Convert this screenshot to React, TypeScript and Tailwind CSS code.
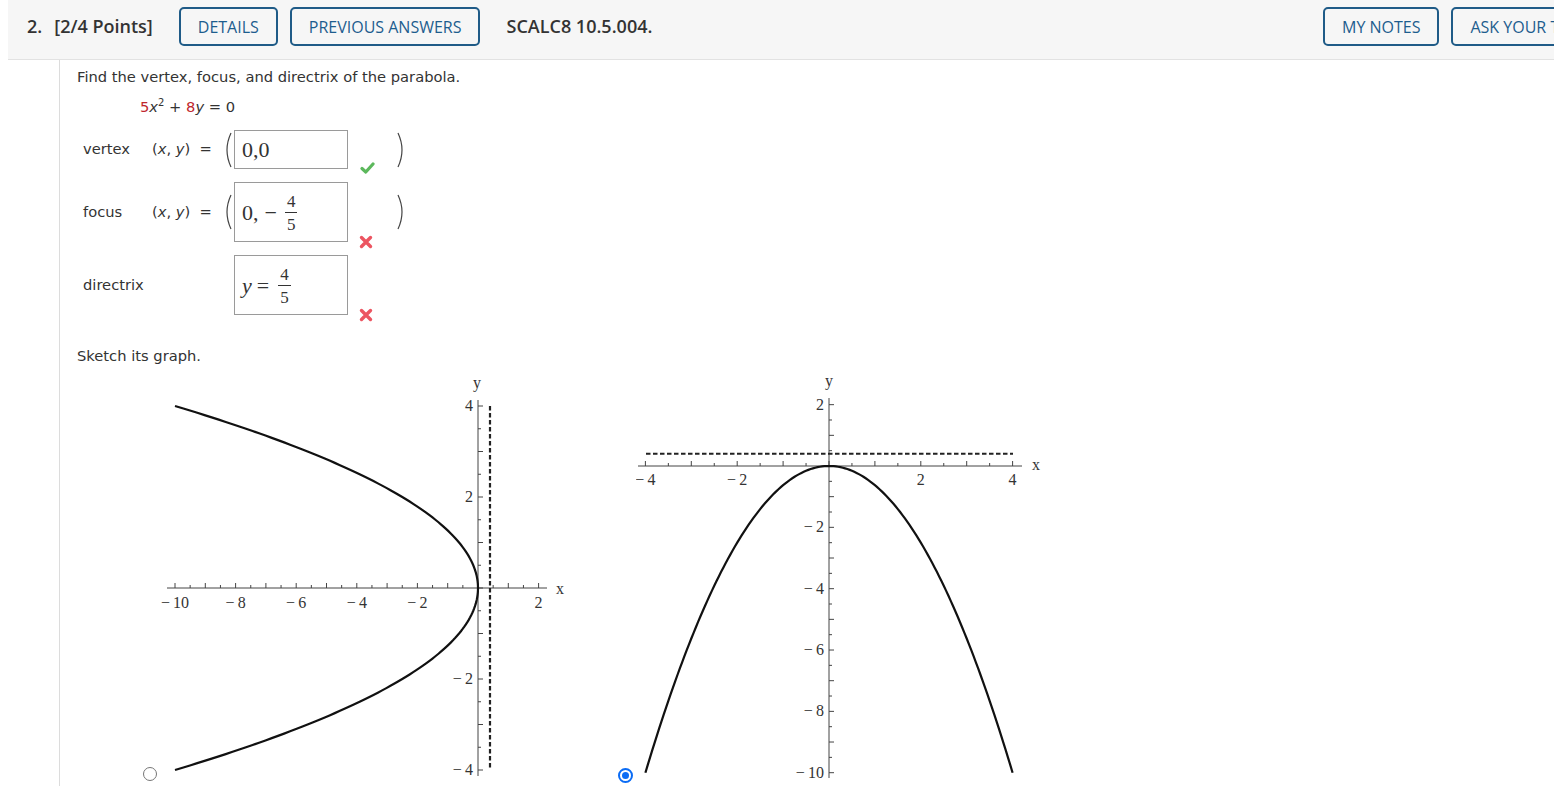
import React from 'react';

const serif = { fontFamily: '"Liberation Serif", "Times New Roman", serif' };

const HeaderButton = ({ label }: { label: string }) => (
  <div className="h-[39px] px-[17px] shrink-0 whitespace-nowrap flex items-center border-2 border-[#1f5b87] rounded-[5px] text-[16px] font-medium text-[#1d5d8e]">
    {label}
  </div>
);

const Paren = ({ right = false }: { right?: boolean }) => (
  <svg width="12" height="38" viewBox="0 0 12 38" className="shrink-0">
    <path
      d={right ? 'M3 2 Q11 19 3 36' : 'M9 2 Q1 19 9 36'}
      fill="none"
      stroke="#444"
      strokeWidth="1.2"
    />
  </svg>
);

const Check = () => (
  <svg width="15" height="12" viewBox="0 0 15 12">
    <path d="M2 6.5 L5.8 10 L13 2" fill="none" stroke="#5cb85c" strokeWidth="3.2" strokeLinecap="round" strokeLinejoin="round" />
  </svg>
);

const Cross = () => (
  <svg width="14" height="14" viewBox="0 0 14 14">
    <path d="M2.5 2.5 L11.5 11.5 M11.5 2.5 L2.5 11.5" stroke="#ec5561" strokeWidth="3.4" strokeLinecap="round" />
  </svg>
);

const Frac = ({ n, d }: { n: string; d: string }) => (
  <span className="inline-flex flex-col items-center text-[17px] leading-none">
    <span className="px-[2px] pb-[2px]">{n}</span>
    <span className="px-[2px] pt-[3px] border-t border-[#333]">{d}</span>
  </span>
);

const Box = ({ tall, children }: { tall?: boolean; children: React.ReactNode }) => (
  <div
    className={`${tall ? 'h-[60px]' : 'h-[39px]'} w-[114px] shrink-0 border border-[#9a9a9a] bg-white flex items-center pl-[7px] text-[#333]`}
    style={serif}
  >
    {children}
  </div>
);

type Tick = { x1: number; y1: number; x2: number; y2: number };

function ticks(from: number, to: number, fn: (v: number, major: boolean) => Tick) {
  const out: Tick[] = [];
  for (let k = from; k <= to; k++) {
    out.push(fn(k / 2, k % 2 === 0));
  }
  return out;
}

const num = (v: number) => (v < 0 ? '\u2212\u2009' + -v : String(v));

const GraphLeft = () => {
  const X0 = 478, Y0 = 585, SX = 30.3, SY = 45.5;
  const px = (x: number) => X0 + SX * x;
  const py = (y: number) => Y0 - SY * y;
  let d = '';
  for (let i = 0; i <= 160; i++) {
    const y = -4 + i * 0.05;
    const x = -0.625 * y * y;
    d += (i === 0 ? 'M' : 'L') + px(x).toFixed(2) + ' ' + py(y).toFixed(2) + ' ';
  }
  const xt = ticks(-20, 4, (v, m) => ({ x1: px(v), y1: Y0, x2: px(v), y2: Y0 - (m ? 5 : 3) }));
  const yt = ticks(-8, 8, (v, m) => ({ x1: X0, y1: py(v), x2: X0 + (m ? 5 : 3), y2: py(v) }));
  return (
    <svg width="420" height="421" viewBox="160 365 420 421" className="shrink-0" style={serif}>
      <line x1="167" y1={Y0} x2="547" y2={Y0} stroke="#444" strokeWidth="1" />
      <line x1={X0} y1="397" x2={X0} y2="773" stroke="#444" strokeWidth="1" />
      {xt.concat(yt).map((t, i) => (
        <line key={i} {...t} stroke="#444" strokeWidth="1" />
      ))}
      <line x1="490" y1="403" x2="490" y2="767" stroke="#222" strokeWidth="2.2" strokeDasharray="4.5 2.5" />
      <path d={d} fill="none" stroke="#111" strokeWidth="2.2" />
      {[-10, -8, -6, -4, -2, 2].map(v => (
        <text key={v} x={px(v)} y={Y0 + 20} fontSize="16" textAnchor="middle" fill="#333">
          {num(v)}
        </text>
      ))}
      {[4, 2, -2, -4].map(v => (
        <text key={v} x={X0 - 5} y={py(v) + 5} fontSize="16" textAnchor="end" fill="#333">
          {num(v)}
        </text>
      ))}
      <text x="477" y="385" fontSize="16" textAnchor="middle" fill="#333">y</text>
      <text x="560" y="591" fontSize="16" textAnchor="middle" fill="#333">x</text>
    </svg>
  );
};

const GraphRight = () => {
  const X0 = 829, Y0 = 463, SX = 45.9, SY = 30.67;
  const px = (x: number) => X0 + SX * x;
  const py = (y: number) => Y0 - SY * y;
  let d = '';
  for (let i = 0; i <= 160; i++) {
    const x = -4 + i * 0.05;
    const y = -0.625 * x * x;
    d += (i === 0 ? 'M' : 'L') + px(x).toFixed(2) + ' ' + py(y).toFixed(2) + ' ';
  }
  const xt = ticks(-8, 8, (v, m) => ({ x1: px(v), y1: Y0, x2: px(v), y2: Y0 - (m ? 5 : 3) }));
  const yt = ticks(-20, 4, (v, m) => ({ x1: X0, y1: py(v), x2: X0 + (m ? 5 : 3), y2: py(v) }));
  return (
    <svg width="420" height="421" viewBox="636 365 420 421" className="shrink-0" style={serif}>
      <line x1="638" y1={Y0} x2="1022" y2={Y0} stroke="#444" strokeWidth="1" />
      <line x1={X0} y1="395" x2={X0} y2="775" stroke="#444" strokeWidth="1" />
      {xt.concat(yt).map((t, i) => (
        <line key={i} {...t} stroke="#444" strokeWidth="1" />
      ))}
      <line x1="646" y1={py(0.4)} x2="1013" y2={py(0.4)} stroke="#222" strokeWidth="2.2" strokeDasharray="4.5 2.5" />
      <path d={d} fill="none" stroke="#111" strokeWidth="2.2" />
      {[-4, -2, 2, 4].map(v => (
        <text key={v} x={px(v)} y={Y0 + 19} fontSize="16" textAnchor="middle" fill="#333">
          {num(v)}
        </text>
      ))}
      {[2, -2, -4, -6, -8, -10].map(v => (
        <text key={v} x={X0 - 5} y={py(v) + 5} fontSize="16" textAnchor="end" fill="#333">
          {num(v)}
        </text>
      ))}
      <text x="829" y="383" fontSize="16" textAnchor="middle" fill="#333">y</text>
      <text x="1036" y="467" fontSize="16" textAnchor="middle" fill="#333">x</text>
    </svg>
  );
};

export default function App() {
  return (
    <div className="w-[1554px] min-h-[786px] bg-white overflow-hidden" style={{ fontFamily: '"DejaVu Sans", Verdana, sans-serif' }}>
      {/* question header */}
      <div
        className="ml-[8px] h-[60px] bg-[#f6f6f6] border-b border-[#e2e2e2] flex items-start pt-[7px] pl-[19px] overflow-hidden text-[#333]"
        style={{ fontFamily: '"Open Sans", Arial, sans-serif' }}
      >
        <div className="h-[39px] flex items-center text-[18px] font-semibold whitespace-nowrap">
          <span>2.</span>
          <span className="ml-[12px]">[2/4 Points]</span>
        </div>
        <div className="ml-[26px]"><HeaderButton label="DETAILS" /></div>
        <div className="ml-[12px]"><HeaderButton label="PREVIOUS ANSWERS" /></div>
        <div className="ml-[26px] h-[39px] flex items-center text-[18px] font-semibold whitespace-nowrap">SCALC8 10.5.004.</div>
        <div className="ml-auto w-[231px] shrink-0 overflow-hidden flex gap-[12px]">
          <HeaderButton label="MY NOTES" />
          <HeaderButton label="ASK YOUR TEACHER" />
        </div>
      </div>

      {/* question body */}
      <div className="ml-[59px] border-l border-[#dcdcdc] pl-[17px] pt-[9px] text-[14.7px] text-[#333] min-h-[726px]">
        <p className="leading-[16px]">Find the vertex, focus, and directrix of the parabola.</p>
        <p className="leading-[16px] mt-[14px] ml-[63px] whitespace-nowrap">
          <span className="text-[#c0272d]">5</span>
          <i>x</i>
          <sup className="text-[10px] relative -top-[6px]">2</sup> + <span className="text-[#c0272d]">8</span>
          <i>y</i> = 0
        </p>

        <div className="ml-[6px] mt-[15px]">
          {/* vertex */}
          <div className="flex items-center">
            <div className="w-[69px] shrink-0">vertex</div>
            <div className="w-[70px] shrink-0 whitespace-nowrap">(<i>x</i>, <i>y</i>) &nbsp;=</div>
            <Paren />
            <Box>
              <span className="text-[22px]">0,0</span>
            </Box>
            <div className="w-[47px] shrink-0 self-end translate-y-[5px] pl-[12px]"><Check /></div>
            <Paren right />
          </div>

          {/* focus */}
          <div className="flex items-center mt-[13px]">
            <div className="w-[69px] shrink-0">focus</div>
            <div className="w-[70px] shrink-0 whitespace-nowrap">(<i>x</i>, <i>y</i>) &nbsp;=</div>
            <Paren />
            <Box tall>
              <span className="text-[22px]">0,</span>
              <span className="text-[22px] ml-[6px]">{'\u2212'}</span>
              <span className="ml-[8px]"><Frac n="4" d="5" /></span>
            </Box>
            <div className="w-[47px] shrink-0 self-end translate-y-[7px] pl-[11px]"><Cross /></div>
            <Paren right />
          </div>

          {/* directrix */}
          <div className="flex items-center mt-[13px]">
            <div className="w-[151px] shrink-0">directrix</div>
            <Box tall>
              <span className="text-[22px] italic">y</span>
              <span className="text-[22px] ml-[5px]">=</span>
              <span className="ml-[9px]"><Frac n="4" d="5" /></span>
            </Box>
            <div className="w-[47px] shrink-0 self-end translate-y-[7px] pl-[11px]"><Cross /></div>
          </div>
        </div>

        <p className="leading-[16px] mt-[33px]">Sketch its graph.</p>

        <div className="flex items-end mt-[4px] ml-[66px]">
          <div className="flex items-end">
            <div className="w-[14px] h-[14px] mb-[8px] mr-[3px] rounded-full border border-[#767676] bg-white shrink-0" />
            <GraphLeft />
          </div>
          <div className="flex items-end ml-[38px]">
            <div className="w-[15px] h-[15px] mb-[6px] mr-[3px] rounded-full border-2 border-[#0b6cf5] bg-white flex items-center justify-center shrink-0">
              <div className="w-[7px] h-[7px] rounded-full bg-[#0b6cf5]" />
            </div>
            <GraphRight />
          </div>
        </div>
      </div>
    </div>
  );
}
